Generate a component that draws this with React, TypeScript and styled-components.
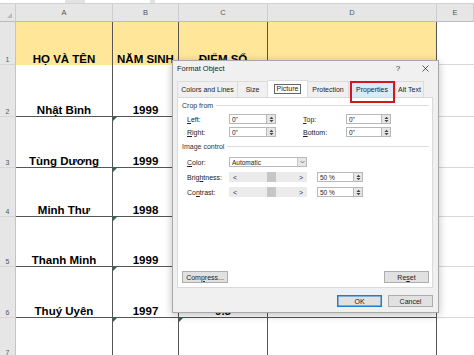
import React from 'react';
import styled, { createGlobalStyle } from 'styled-components';

const GlobalStyle = createGlobalStyle`
  html, body {
    margin: 0;
    padding: 0;
  }
  body {
    width: 474px;
    height: 355px;
    overflow: hidden;
    background: #fff;
    font-family: "Liberation Sans", Arial, sans-serif;
  }
`;

const COLS = ['A', 'B', 'C', 'D', 'E'];
const COL_TRACKS = '16px 97px 66px 89px 169px 37px';
const ROW_TRACKS = '43px 52px 51px 49px 50px 51px 40px';

interface RowData {
  a: string;
  b: string;
  c: string;
  flagged?: boolean;
}

const rows: RowData[] = [
  { a: 'HỌ VÀ TÊN', b: 'NĂM SINH', c: 'ĐIỂM SỐ' },
  { a: 'Nhật Bình', b: '1999', c: '8.5' },
  { a: 'Tùng Dương', b: '1999', c: '9', flagged: true },
  { a: 'Minh Thư', b: '1998', c: '7.5', flagged: true },
  { a: 'Thanh Minh', b: '1999', c: '8', flagged: true },
  { a: 'Thuý Uyên', b: '1997', c: '9.5', flagged: true },
  { a: '', b: '', c: '', flagged: true },
];

const Spinner: React.FC = () => (
  <SpinBox>
    <svg width="5" height="7" viewBox="0 0 5 7">
      <path d="M0.5 3 L2.5 0.8 L4.5 3 Z" fill="#444" />
      <path d="M0.5 4 L2.5 6.2 L4.5 4 Z" fill="#444" />
    </svg>
  </SpinBox>
);

const CloseIcon: React.FC = () => (
  <svg width="7" height="7" viewBox="0 0 7 7">
    <path d="M0.5 0.5 L6.5 6.5 M6.5 0.5 L0.5 6.5" stroke="#333" strokeWidth="0.8" />
  </svg>
);

const App: React.FC = () => {
  return (
    <>
      <GlobalStyle />
      <Sheet>
        <FormulaStrip>
          <FormulaBox $w={65} $gap={0} />
          <FormulaBox $w={65} $gap={20} />
          <FormulaBox $gap={5} />
        </FormulaStrip>
        <ColumnHeaders>
          <Corner />
          {COLS.map((c) => (
            <ColHead key={c}>{c}</ColHead>
          ))}
        </ColumnHeaders>
        <Grid>
          {rows.map((r, i) => (
            <React.Fragment key={i}>
              <RowHead>{i + 1}</RowHead>
              <Cell $head={i === 0}>{r.a}</Cell>
              <Cell $head={i === 0}>
                {r.flagged && <Flag />}
                {r.b}
              </Cell>
              <Cell $head={i === 0}>
                {r.flagged && <Flag />}
                {r.c}
              </Cell>
              <Cell $head={i === 0} />
              <OuterCell />
            </React.Fragment>
          ))}
        </Grid>

        <Dialog>
          <TitleBar>
            <Title>Format Object</Title>
            <TitleButton $w={28}>?</TitleButton>
            <TitleButton $w={26}>
              <CloseIcon />
            </TitleButton>
          </TitleBar>
          <Body>
            <TabStrip>
              <Tab $w={61}>Colors and Lines</Tab>
              <Tab $w={30}>Size</Tab>
              <Tab $w={40} $active>
                <FocusLabel>Picture</FocusLabel>
              </Tab>
              <Tab $w={41}>Protection</Tab>
              <Tab $w={47} $hover>
                Properties
                <RedMark />
              </Tab>
              <Tab $w={28}>Alt Text</Tab>
            </TabStrip>
            <Panel>
              <SectionTitle $gap={0}>Crop from</SectionTitle>
              <FieldRow $gap={4}>
                <Label $w={42}>
                  <u>L</u>eft:
                </Label>
                <Input $w={38}>0"</Input>
                <Spinner />
                <Label $w={43} $ml={27}>
                  <u>T</u>op:
                </Label>
                <Input $w={36}>0"</Input>
                <Spinner />
              </FieldRow>
              <FieldRow $gap={3}>
                <Label $w={42}>
                  <u>R</u>ight:
                </Label>
                <Input $w={38}>0"</Input>
                <Spinner />
                <Label $w={43} $ml={27}>
                  <u>B</u>ottom:
                </Label>
                <Input $w={36}>0"</Input>
                <Spinner />
              </FieldRow>

              <SectionTitle $gap={5}>Image control</SectionTitle>
              <FieldRow $gap={6}>
                <Label $w={42}>
                  <u>C</u>olor:
                </Label>
                <Select>
                  <SelectText>Automatic</SelectText>
                  <SelectArrow>
                    <svg width="5" height="4" viewBox="0 0 5 4">
                      <path d="M0.5 1 L2.5 3 L4.5 1" stroke="#555" strokeWidth="0.7" fill="none" />
                    </svg>
                  </SelectArrow>
                </Select>
              </FieldRow>
              <FieldRow $gap={5}>
                <Label $w={42}>
                  Brig<u>h</u>tness:
                </Label>
                <Slider>
                  <SliderArrow>&lt;</SliderArrow>
                  <span />
                  <SliderThumb />
                  <span />
                  <SliderArrow>&gt;</SliderArrow>
                </Slider>
                <Input $w={37} $ml={10}>50 %</Input>
                <Spinner />
              </FieldRow>
              <FieldRow $gap={5}>
                <Label $w={42}>
                  Co<u>n</u>trast:
                </Label>
                <Slider>
                  <SliderArrow>&lt;</SliderArrow>
                  <span />
                  <SliderThumb />
                  <span />
                  <SliderArrow>&gt;</SliderArrow>
                </Slider>
                <Input $w={37} $ml={10}>50 %</Input>
                <Spinner />
              </FieldRow>

              <PanelFooter>
                <Button $w={46}>
                  Com<u>p</u>ress...
                </Button>
                <Button $w={45}>
                  Re<u>s</u>et
                </Button>
              </PanelFooter>
            </Panel>
            <DialogFooter>
              <Button $w={45} $primary>
                OK
              </Button>
              <Button $w={45}>Cancel</Button>
            </DialogFooter>
          </Body>
        </Dialog>
      </Sheet>
    </>
  );
};

export default App;

const Sheet = styled.div`
  position: relative;
  width: 474px;
  height: 355px;
  overflow: hidden;
  background: #fff;
`;

const FormulaStrip = styled.div`
  display: flex;
  height: 3px;
  background: #e2e2e2;
  border-bottom: 1px solid #d2d2d2;
`;

const FormulaBox = styled.div<{ $w?: number; $gap: number }>`
  flex: ${({ $w }) => ($w ? 'none' : 1)};
  width: ${({ $w }) => ($w ? `${$w}px` : 'auto')};
  margin-left: ${({ $gap }) => $gap}px;
  background: #fff;
`;

const ColumnHeaders = styled.div`
  display: grid;
  grid-template-columns: ${COL_TRACKS};
  height: 18px;
`;

const ColHead = styled.div`
  display: flex;
  align-items: center;
  justify-content: center;
  box-sizing: border-box;
  background: #e6e6e6;
  border-right: 1px solid #cdcdcd;
  border-bottom: 1px solid #bcbcbc;
  font-size: 7.5px;
  color: #555;
`;

const Corner = styled(ColHead)`
  position: relative;

  &::after {
    content: '';
    position: absolute;
    right: 3px;
    bottom: 3px;
    border-left: 5px solid transparent;
    border-bottom: 5px solid #b8b8b8;
  }
`;

const Grid = styled.div`
  display: grid;
  grid-template-columns: ${COL_TRACKS};
  grid-template-rows: ${ROW_TRACKS};
`;

const RowHead = styled.div`
  display: flex;
  align-items: flex-end;
  justify-content: center;
  box-sizing: border-box;
  padding-bottom: 0;
  background: #e6e6e6;
  border-right: 1px solid #c4c4c4;
  border-bottom: 1px solid #d6d6d6;
  font-size: 7px;
  line-height: 8px;
  color: #555;
`;

const Cell = styled.div<{ $head?: boolean }>`
  position: relative;
  display: flex;
  align-items: flex-end;
  justify-content: center;
  box-sizing: border-box;
  background: ${({ $head }) => ($head ? '#ffe699' : '#fff')};
  border-right: 1px solid #555;
  border-bottom: ${({ $head }) => ($head ? 'none' : '1px solid #555')};
  font-weight: bold;
  font-size: 11.5px;
  line-height: 11px;
  color: #000;
  white-space: nowrap;
`;

const OuterCell = styled.div`
  box-sizing: border-box;
  border-bottom: 1px solid #d8d8d8;
`;

const Flag = styled.span`
  position: absolute;
  top: 0;
  left: 0;
  border-top: 4px solid #1f7244;
  border-right: 4px solid transparent;
`;

const Dialog = styled.div`
  position: absolute;
  left: 172px;
  top: 60px;
  width: 267px;
  height: 253px;
  box-sizing: border-box;
  display: flex;
  flex-direction: column;
  background: #f0f0f0;
  border: 1px solid #a8a8a8;
  box-shadow: 0 2px 8px rgba(0, 0, 0, 0.25);
  font-family: "Liberation Sans", Arial, sans-serif;
  font-size: 7px;
  color: #1b1b1b;
`;

const TitleBar = styled.div`
  display: flex;
  align-items: center;
  height: 15px;
  padding-left: 4px;
`;

const Title = styled.span`
  flex: 1;
  font-size: 7.5px;
  color: #222;
`;

const TitleButton = styled.span<{ $w: number }>`
  display: flex;
  align-items: center;
  justify-content: center;
  width: ${({ $w }) => $w}px;
  font-size: 8px;
  color: #333;
`;

const Body = styled.div`
  flex: 1;
  display: flex;
  flex-direction: column;
  padding: 4px 5px 0 4px;
`;

const TabStrip = styled.div`
  display: flex;
  align-items: flex-end;
  height: 17px;
`;

const Tab = styled.div<{ $w: number; $active?: boolean; $hover?: boolean }>`
  position: relative;
  box-sizing: border-box;
  width: ${({ $w }) => $w}px;
  height: ${({ $active }) => ($active ? 17 : 16)}px;
  display: flex;
  align-items: center;
  justify-content: center;
  background: ${({ $active, $hover }) => ($active ? '#fff' : $hover ? '#d9eaf9' : '#f0f0f0')};
  border-top: 1px solid #dcdcdc;
  border-right: 1px solid #dcdcdc;
  white-space: nowrap;

  &:first-child {
    border-left: 1px solid #dcdcdc;
  }
`;

const FocusLabel = styled.span`
  padding: 0 2px;
  line-height: 8px;
  border: 1px solid #666;
`;

const RedMark = styled.span`
  position: absolute;
  top: -1px;
  left: 1px;
  right: 0;
  height: 22px;
  box-sizing: border-box;
  border: 2px solid #d4161f;
  z-index: 2;
`;

const Panel = styled.div`
  height: 191px;
  box-sizing: border-box;
  display: flex;
  flex-direction: column;
  padding: 3px 3px 4px 4px;
  background: #fff;
  border: 1px solid #d9d9d9;
`;

const SectionTitle = styled.div<{ $gap: number }>`
  display: flex;
  align-items: center;
  gap: 3px;
  height: 9px;
  margin-top: ${({ $gap }) => $gap}px;
  color: #333;

  &::after {
    content: '';
    flex: 1;
    height: 1px;
    background: #dcdcdc;
  }
`;

const FieldRow = styled.div<{ $gap: number }>`
  display: flex;
  align-items: center;
  height: 10px;
  margin-top: ${({ $gap }) => $gap}px;
  padding-left: 5px;
`;

const Label = styled.label<{ $w: number; $ml?: number }>`
  width: ${({ $w }) => $w}px;
  margin-left: ${({ $ml }) => $ml ?? 0}px;
  color: #222;
  white-space: nowrap;
`;

const Input = styled.div<{ $w: number; $ml?: number }>`
  box-sizing: border-box;
  display: flex;
  align-items: center;
  width: ${({ $w }) => $w}px;
  height: 10px;
  margin-left: ${({ $ml }) => $ml ?? 0}px;
  padding-left: 2px;
  background: #fff;
  border: 1px solid #b8b8b8;
  font-size: 6.5px;
  color: #222;
`;

const SpinBox = styled.span`
  box-sizing: border-box;
  display: flex;
  align-items: center;
  justify-content: center;
  width: 9px;
  height: 10px;
  background: #e6e6e6;
  border: 1px solid #b8b8b8;
  border-left: none;
`;

const Select = styled.div`
  box-sizing: border-box;
  display: flex;
  width: 78px;
  height: 10px;
  background: #fff;
  border: 1px solid #b8b8b8;
`;

const SelectText = styled.span`
  flex: 1;
  display: flex;
  align-items: center;
  padding-left: 2px;
  font-size: 6.5px;
  color: #222;
`;

const SelectArrow = styled.span`
  display: flex;
  align-items: center;
  justify-content: center;
  width: 8px;
  background: #e6e6e6;
  border-left: 1px solid #c8c8c8;
`;

const Slider = styled.div`
  display: grid;
  grid-template-columns: 12px 26px 9px 1fr 12px;
  width: 78px;
  height: 10px;
  background: #ebebeb;
`;

const SliderArrow = styled.span`
  display: flex;
  align-items: center;
  justify-content: center;
  font-size: 7px;
  color: #333;
`;

const SliderThumb = styled.span`
  background: #c6c6c6;
`;

const PanelFooter = styled.div`
  display: flex;
  justify-content: space-between;
  margin-top: auto;
`;

const DialogFooter = styled.div`
  display: flex;
  justify-content: flex-end;
  gap: 6px;
  margin-top: 7px;
`;

const Button = styled.div<{ $w: number; $primary?: boolean }>`
  box-sizing: border-box;
  display: flex;
  align-items: center;
  justify-content: center;
  width: ${({ $w }) => $w}px;
  height: 12px;
  background: #e1e1e1;
  border: 1px solid ${({ $primary }) => ($primary ? '#1a7fd4' : '#adadad')};
  box-shadow: ${({ $primary }) => ($primary ? 'inset 0 0 0 0.5px #1a7fd4' : 'none')};
  font-size: 7px;
  color: #222;
`;
